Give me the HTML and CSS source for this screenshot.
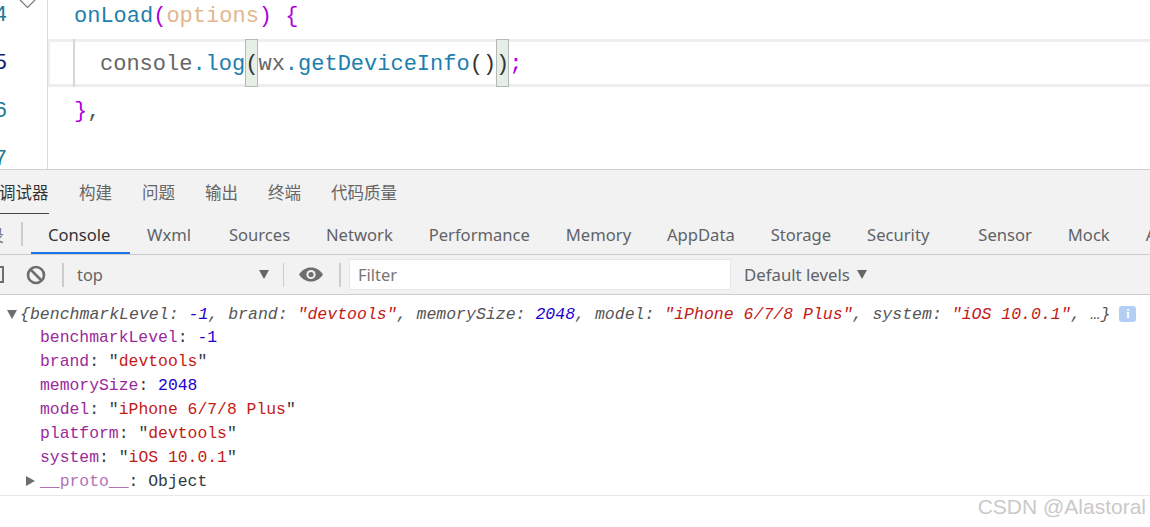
FILE: index.html
```html
<!DOCTYPE html>
<html lang="zh">
<head>
<meta charset="utf-8">
<title>Console</title>
<link rel="stylesheet" href="styles.css">
</head>
<body>
<div class="app">
  <section class="editor">
    <div class="gutter">
      <div class="ln ln-first">4</div>
      <div class="ln ln-active">5</div>
      <div class="ln">6</div>
      <div class="ln">7</div>
      <svg class="fold" width="20" height="10" viewBox="0 0 20 10"><path d="M2 0 L9.5 7.5 L17 0" fill="none" stroke="#777" stroke-width="1.2"/></svg>
    </div>
    <div class="code">
      <div class="line line-first"><span class="fn">onLoad</span><span class="kw">(</span><span class="param">options</span><span class="kw">)</span> <span class="kw">{</span></div>
      <div class="line line-active"><span class="guide"></span><span class="ident">console</span><span class="fn">.log</span><span class="match">(</span><span class="ident">wx</span><span class="fn">.getDeviceInfo</span><span class="punc">()</span><span class="match">)</span><span class="kw">;</span></div>
      <div class="line line-next"><span class="kw">}</span><span class="comma">,</span></div>
      <div class="line"></div>
    </div>
  </section>

  <nav class="panel-tabs">
    <span class="ptab ptab-on">调试器</span>
    <span class="ptab">构建</span>
    <span class="ptab">问题</span>
    <span class="ptab">输出</span>
    <span class="ptab">终端</span>
    <span class="ptab">代码质量</span>
  </nav>

  <nav class="dev-tabs">
    <span class="cut-icon">录</span>
    <span class="vsep"></span>
    <span class="dtab dtab-on">Console</span>
    <span class="dtab">Wxml</span>
    <span class="dtab">Sources</span>
    <span class="dtab">Network</span>
    <span class="dtab">Performance</span>
    <span class="dtab">Memory</span>
    <span class="dtab">AppData</span>
    <span class="dtab">Storage</span>
    <span class="dtab dtab-wide">Security</span>
    <span class="dtab">Sensor</span>
    <span class="dtab">Mock</span>
    <span class="dtab">AppConfig</span>
  </nav>

  <div class="toolbar">
    <span class="sidebar-icon"></span>
    <svg class="block" width="22" height="22" viewBox="0 0 22 22"><circle cx="11" cy="11" r="8" fill="none" stroke="#6e6e6e" stroke-width="2.6"/><path d="M5.5 5.5 L16.5 16.5" stroke="#6e6e6e" stroke-width="2.6"/></svg>
    <span class="tsep"></span>
    <div class="context">
      <span>top</span>
      <span class="tri"></span>
    </div>
    <span class="tsep thin"></span>
    <svg class="eye" width="24" height="15" viewBox="1 1 24 14"><path d="M1 8 C5 2.5 9 1 13 1 C17 1 21 2.5 25 8 C21 13.5 17 15 13 15 C9 15 5 13.5 1 8 Z" fill="#6e6e6e"/><circle cx="13" cy="8" r="4.6" fill="#f2f2f2"/><circle cx="13" cy="8" r="2.6" fill="#6e6e6e"/></svg>
    <span class="tsep sep-after-eye"></span>
    <div class="filter">Filter</div>
    <div class="levels"><span>Default levels</span><span class="tri tri-small"></span></div>
  </div>

  <section class="console">
    <div class="row summary">
      <span class="arrow-down"></span>
      <span class="sum-text">{benchmarkLevel: <b class="num">-1</b>, brand: <b class="str">"devtools"</b>, memorySize: <b class="num">2048</b>, model: <b class="str">"iPhone 6/7/8 Plus"</b>, system: <b class="str">"iOS 10.0.1"</b>, …}</span>
      <span class="info">i</span>
    </div>
    <div class="row prop"><span class="key">benchmarkLevel</span>: <span class="num">-1</span></div>
    <div class="row prop"><span class="key">brand</span>: "<span class="str">devtools</span>"</div>
    <div class="row prop"><span class="key">memorySize</span>: <span class="num">2048</span></div>
    <div class="row prop"><span class="key">model</span>: "<span class="str">iPhone 6/7/8 Plus</span>"</div>
    <div class="row prop"><span class="key">platform</span>: "<span class="str">devtools</span>"</div>
    <div class="row prop"><span class="key">system</span>: "<span class="str">iOS 10.0.1</span>"</div>
    <div class="row prop proto"><span class="arrow-right"></span><span class="key-dim">__proto__</span>: <span class="obj">Object</span></div>
    <div class="console-end"></div>
    <div class="watermark">CSDN @Alastoral</div>
  </section>
</div>
</body>
</html>
```
FILE: styles.css
```css
* { box-sizing: border-box; }
html, body { margin: 0; padding: 0; background: #fff; }
body { width: 1150px; height: 527px; overflow: hidden; }
.app { display: flex; flex-direction: column; height: 527px; overflow: hidden; font-family: "Noto Sans", "Noto Sans CJK SC", sans-serif; }

/* editor */
.editor { display: flex; height: 170px; flex: none; border-bottom: 1px solid #d0d0d0; background: #fff; overflow: hidden; }
.gutter { position: relative; width: 48px; flex: none; border-right: 1px solid #dcdcdc; font: 22px/48px "Liberation Mono", monospace; color: #237893; }
.ln { height: 48px; margin-left: -6px; }
.ln-first { margin-top: -8px; }
.ln-active { color: #0b216f; }
.fold { position: absolute; left: 18px; top: 0; }
.code { flex: 1; font: 22px/48px "Liberation Mono", monospace; margin-top: -8px; }
.line { height: 48px; padding-left: 26px; white-space: pre; }
.line-first { height: 47px; line-height: 50px; }
.line-active { position: relative; border-top: 3px solid #eeeeee; border-bottom: 3px solid #eeeeee; border-left: 2px solid #eeeeee; line-height: 46px; padding-left: 50px; }
.line-next { line-height: 50px; }
.guide { position: absolute; left: 23px; top: -3px; bottom: -3px; width: 2px; background: #d6d6d6; }
.fn { color: #1d7fae; }
.kw { color: #af00db; }
.param { color: #e3b68c; }
.ident { color: #666; }
.punc { color: #333; }
.comma { color: #555; }
.match { display: inline-block; color: #333; background: #e6efe6; box-shadow: inset 0 0 0 1px #b5b9b5; height: 48px; margin-top: -3px; line-height: 52px; vertical-align: top; }

/* panel tabs */
.panel-tabs { display: flex; gap: 30px; height: 44px; flex: none; background: #f2f2f2; font-size: 16.5px; color: #666; padding-top: 11px; }
.ptab { height: 33px; line-height: 24px; }
.ptab-on { color: #333; margin-left: -1px; border-bottom: 1px solid #444; width: 50px; }

/* devtools tabs */
.dev-tabs { display: flex; align-items: center; height: 41px; flex: none; background: #f2f2f2; border-bottom: 1px solid #ccc; font-size: 16.6px; color: #5f6368; white-space: nowrap; overflow: hidden; }
.cut-icon { width: 4px; overflow: hidden; font-size: 17px; color: #777; direction: rtl; flex: none; }
.vsep { width: 2px; height: 24px; background: #ccc; margin-left: 17px; flex: none; }
.dtab { height: 40px; line-height: 42px; margin-left: 35.9px; flex: none; }
.dtab-on { color: #333; margin-left: 8px; padding: 0 17px; border-bottom: 2px solid #1a73e8; width: 99px; }
.dtab-on + .dtab { margin-left: 17px; padding-right: 2px; }
.dtab-wide + .dtab { margin-left: 49px; }

/* toolbar */
.toolbar { display: flex; align-items: center; height: 40px; flex: none; background: #f2f2f2; border-bottom: 1px solid #ccc; font-size: 16.4px; color: #666; }
.sidebar-icon { width: 4px; height: 17px; border: 2px solid #6e6e6e; border-left: 0; flex: none; }
.block { margin-left: 21px; flex: none; }
.tsep { width: 2px; height: 24px; background: #ccc; margin-left: 15px; flex: none; }
.tsep.thin { width: 1px; margin-left: 14px; }
.tsep.sep-after-eye { margin-left: 16px; }
.context { width: 192px; display: flex; align-items: center; justify-content: space-between; margin-left: 13px; }
.tri { width: 0; height: 0; border-left: 5.5px solid transparent; border-right: 5.5px solid transparent; border-top: 9px solid #666; }
.tri-small { margin-left: 7px; }
.eye { margin-left: 15px; flex: none; }
.filter { width: 382px; height: 31px; line-height: 29px; background: #fff; margin-left: 8px; padding-left: 8px; border: 1px solid #e6e6e6; color: #757575; flex: none; }
.levels { display: flex; align-items: center; margin-left: 13px; color: #5f6368; font-size: 16.8px; }

/* console */
.console { flex: 1; position: relative; background: #fff; font: 16.4px/24px "Liberation Mono", monospace; color: #303942; padding-top: 7px; }
.row { height: 24px; white-space: pre; }
.summary { display: flex; align-items: center; }
.arrow-down { width: 0; height: 0; margin-left: 7px; margin-right: 3px; border-left: 5.5px solid transparent; border-right: 5.5px solid transparent; border-top: 9px solid #6e6e6e; flex: none; }
.sum-text { font-size: 16.52px; font-style: italic; color: #555; padding-top: 2px; }
.sum-text b { font-weight: normal; }
.info { width: 17px; height: 16px; margin-left: 9px; border-radius: 3px; background: #b3cef5; color: #fff; font: bold 12px/16px "Liberation Serif", serif; text-align: center; flex: none; }
.prop { padding-left: 40px; position: relative; }
.key { color: #9a2a9a; }
.key-dim { color: #b471b4; }
.str { color: #c41a16; }
.num { color: #1c00cf; }
.obj { color: #303942; }
.arrow-right { position: absolute; left: 26px; top: 6px; width: 0; height: 0; border-top: 5.5px solid transparent; border-bottom: 5.5px solid transparent; border-left: 9px solid #6e6e6e; }
.console-end { height: 2px; border-bottom: 1px solid #e8e8e8; }
.watermark { position: absolute; right: 4px; top: 199px; font: 21px/26px "Liberation Sans", sans-serif; color: #c9c9c9; }
```
